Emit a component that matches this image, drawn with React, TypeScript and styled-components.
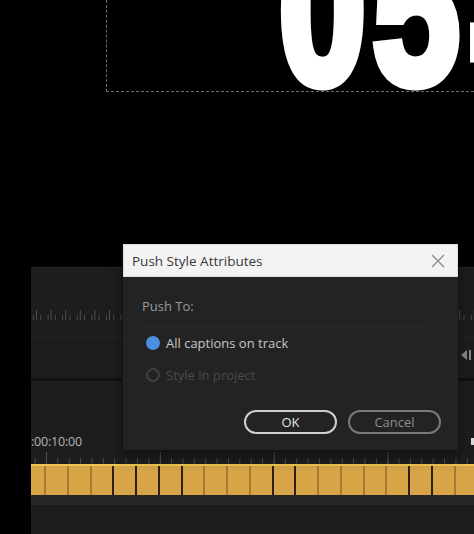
import React from 'react';
import styled, { createGlobalStyle } from 'styled-components';

const GlobalStyle = createGlobalStyle`
  html, body {
    margin: 0;
    padding: 0;
    background: #000;
  }
  body {
    width: 474px;
    height: 534px;
    overflow: hidden;
    font-family: "Open Sans", "Noto Sans", sans-serif;
  }
`;

const Screen = styled.div`
  position: relative;
  width: 474px;
  height: 534px;
  background: #000;
  display: flex;
  flex-direction: column;
  overflow: hidden;
`;

/* ---------- program monitor ---------- */

const Program = styled.div`
  height: 267px;
  flex-shrink: 0;
`;

const SafeFrame = styled.div`
  margin-left: 106px;
  height: 91px;
  border-left: 1px dashed #6a6a80;
  border-bottom: 1px dashed #6a6a80;
  overflow: hidden;
`;

const BigTime = styled.div`
  margin-top: -122px;
  padding-left: 232px;
  font-family: "Liberation Sans", Arial, sans-serif;
  font-weight: 700;
  font-size: 212px;
  line-height: 1;
  color: #fff;
  letter-spacing: 9px;
  white-space: nowrap;
  -webkit-text-stroke: 11px #fff;
  transform: scaleX(0.74);
  transform-origin: left top;
`;

const Colon = styled.span`
  margin-left: -10px;
  vertical-align: 26px;
`;

/* ---------- timeline panel ---------- */

const Panel = styled.div`
  flex: 1;
  margin-left: 31px;
  background: #1d1d1d;
  border-top: 1px solid #262626;
  display: flex;
  flex-direction: column;
`;

const UpperRuler = styled.div`
  margin-top: 42px;
  height: 10px;
  background-image:
    linear-gradient(to right, #4e4e4e 0 1px, transparent 1px),
    linear-gradient(to right, #4e4e4e 0 1px, transparent 1px);
  background-size: 7.3px 5px, 14.6px 10px;
  background-repeat: repeat-x;
  background-position: 2px bottom, 5px bottom;
`;

const FaintLine = styled.div`
  margin-top: 17px;
  height: 1px;
  background: #262626;
`;

const TransportRow = styled.div`
  margin-top: 11px;
  height: 12px;
  display: flex;
  justify-content: flex-end;
  padding-right: 2px;
  color: #8a8a8a;
`;

const DarkLine = styled.div`
  margin-top: 17px;
  height: 3px;
  background: #111;
`;

const TimecodeRow = styled.div`
  margin-top: 52px;
  height: 17px;
  display: flex;
  align-items: center;
  justify-content: space-between;
`;

const Timecode = styled.span`
  font-size: 12.5px;
  color: #b4b4b4;
  letter-spacing: -0.2px;
`;

const Marker = styled.span`
  width: 3px;
  height: 7px;
  background: #d8d8d8;
`;

const TickRuler = styled.div`
  height: 14px;
  background-image:
    linear-gradient(to right, #4a4a4a 0 1px, transparent 1px),
    linear-gradient(to right, #505050 0 1px, transparent 1px);
  background-size: 11.39px 6px, 113.9px 12px;
  background-repeat: repeat-x;
  background-position: 3.6px bottom, 15px bottom;
`;

const ClipTrack = styled.div`
  height: 31px;
  display: flex;
  background: #d7a548;
  border-top: 2px solid #efc652;
  box-sizing: border-box;
  overflow: hidden;
`;

const ClipCell = styled.div<{ $w: number; $dark: boolean }>`
  flex-shrink: 0;
  width: ${({ $w }) => $w}px;
  box-sizing: border-box;
  border-right: 2px solid ${({ $dark }) => ($dark ? '#2e200a' : '#a67a34')};
`;

const UnderBand = styled.div`
  height: 10px;
  background: #272727;
`;

/* ---------- dialog ---------- */

const Dialog = styled.div`
  position: absolute;
  left: 123px;
  top: 244px;
  width: 335px;
  height: 206px;
  background: #232323;
  box-shadow: -1px 0 0 #141414, 0 6px 14px rgba(0, 0, 0, 0.45);
  display: flex;
  flex-direction: column;
`;

const TitleBar = styled.div`
  height: 33px;
  box-sizing: border-box;
  background: #f3f3f3;
  border: 1px solid #dcdcdc;
  display: flex;
  align-items: center;
  justify-content: space-between;
  padding: 0 11px 0 8px;
  color: #383838;
  font-size: 13.5px;
`;

const CloseButton = styled.span`
  display: flex;
  color: #8c8c8c;
`;

const Body = styled.div`
  display: flex;
  flex-direction: column;
  padding: 20px 17px 0 19px;
`;

const Label = styled.div`
  font-size: 13px;
  line-height: 18px;
  color: #9a9a9a;
`;

const Divider = styled.div`
  margin: 11px 12px 0 -2px;
  height: 1px;
  background: #2c2c2c;
`;

const RadioRow = styled.label<{ $disabled?: boolean }>`
  display: flex;
  align-items: center;
  gap: 6px;
  height: 32px;
  margin-left: 4px;
  font-size: 13px;
  color: ${({ $disabled }) => ($disabled ? '#4a4a4a' : '#c6c6c6')};
`;

const RadioDot = styled.span<{ $checked?: boolean }>`
  width: 14px;
  height: 14px;
  border-radius: 50%;
  box-sizing: border-box;
  background: ${({ $checked }) => ($checked ? '#4b8fe0' : 'transparent')};
  border: 2px solid ${({ $checked }) => ($checked ? '#4b8fe0' : '#404040')};
`;

const ButtonRow = styled.div`
  margin-top: 19px;
  display: flex;
  justify-content: flex-end;
  gap: 11px;
`;

const PillButton = styled.button<{ $primary?: boolean }>`
  width: 93px;
  height: 24px;
  border-radius: 12px;
  background: transparent;
  box-sizing: border-box;
  border: 2px solid ${({ $primary }) => ($primary ? '#cfcfcf' : '#7a7a7a')};
  color: ${({ $primary }) => ($primary ? '#e4e4e4' : '#8e8e8e')};
  font-family: inherit;
  font-size: 13px;
  padding: 0;
`;

const dividers = [
  false, false, false, true, true, true, true, false, false,
  false, true, true, false, false, false, false, true, true, false, false,
];

export default function App() {
  return (
    <Screen>
      <GlobalStyle />
      <Program>
        <SafeFrame>
          <BigTime>
            05<Colon>:</Colon>
          </BigTime>
        </SafeFrame>
      </Program>

      <Panel>
        <UpperRuler />
        <FaintLine />
        <TransportRow>
          <svg width="12" height="12" viewBox="0 0 12 12">
            <path d="M7 1 L1 6 L7 11 Z" fill="currentColor" />
            <rect x="9" y="1" width="2" height="10" fill="currentColor" />
          </svg>
        </TransportRow>
        <DarkLine />
        <TimecodeRow>
          <Timecode>:00:10:00</Timecode>
          <Marker />
        </TimecodeRow>
        <TickRuler />
        <ClipTrack>
          {dividers.map((dark, i) => (
            <ClipCell key={i} $w={i === 0 ? 15 : 22.78} $dark={dark} />
          ))}
        </ClipTrack>
        <UnderBand />
      </Panel>

      <Dialog>
        <TitleBar>
          <span>Push Style Attributes</span>
          <CloseButton>
            <svg width="16" height="16" viewBox="0 0 16 16">
              <path d="M2 2 L14 14 M14 2 L2 14" stroke="currentColor" strokeWidth="1.4" />
            </svg>
          </CloseButton>
        </TitleBar>
        <Body>
          <Label>Push To:</Label>
          <Divider />
          <RadioRow>
            <RadioDot $checked />
            All captions on track
          </RadioRow>
          <RadioRow $disabled>
            <RadioDot />
            Style in project
          </RadioRow>
          <ButtonRow>
            <PillButton $primary>OK</PillButton>
            <PillButton>Cancel</PillButton>
          </ButtonRow>
        </Body>
      </Dialog>
    </Screen>
  );
}
